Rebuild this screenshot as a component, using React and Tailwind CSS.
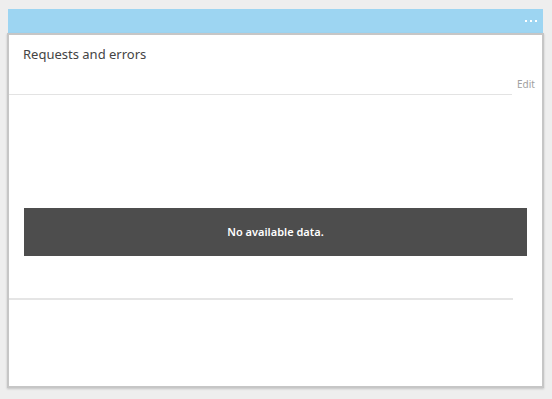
export default function App() {
  return (
    <div className="w-[552px] h-[399px] bg-[#eeeeee] overflow-hidden" style={{ fontFamily: '"Noto Sans", "Open Sans", sans-serif' }}>
      <div className="pt-[9px] pl-[7px]">
        <div className="ml-[1px] w-[535px] h-[24px] bg-[#9dd5f2] flex items-center justify-end pr-[6px]">
          <div className="flex gap-[3px] mt-[-1px]">
            <span className="w-[2px] h-[2px] bg-white"></span>
            <span className="w-[2px] h-[2px] bg-white"></span>
            <span className="w-[2px] h-[2px] bg-white"></span>
          </div>
        </div>
        <div className="w-[537px] h-[355px] bg-white border-2 border-[#c6c6c6] shadow-[0_1px_2px_rgba(0,0,0,0.18)] flex flex-col">
          <div className="flex items-end">
            <div className="w-[503px] h-[60px] border-b border-[#e3e3e3] pl-[14px] pt-[10px]">
              <div className="text-[13px] leading-[18px] text-[#444444]">Requests and errors</div>
            </div>
            <div className="ml-[5px] mb-[4px] text-[10px] leading-[14px] text-[#a0a0a0]">Edit</div>
          </div>
          <div className="h-[203px] pl-[15px] pt-[113px] pr-[15px]">
            <div className="h-[48px] bg-[#4d4d4d] flex items-center justify-center">
              <span className="text-[11px] font-semibold text-white">No available data.</span>
            </div>
          </div>
          <div className="w-[504px] h-[2px] bg-[#e5e5e5]"></div>
        </div>
      </div>
    </div>
  );
}
